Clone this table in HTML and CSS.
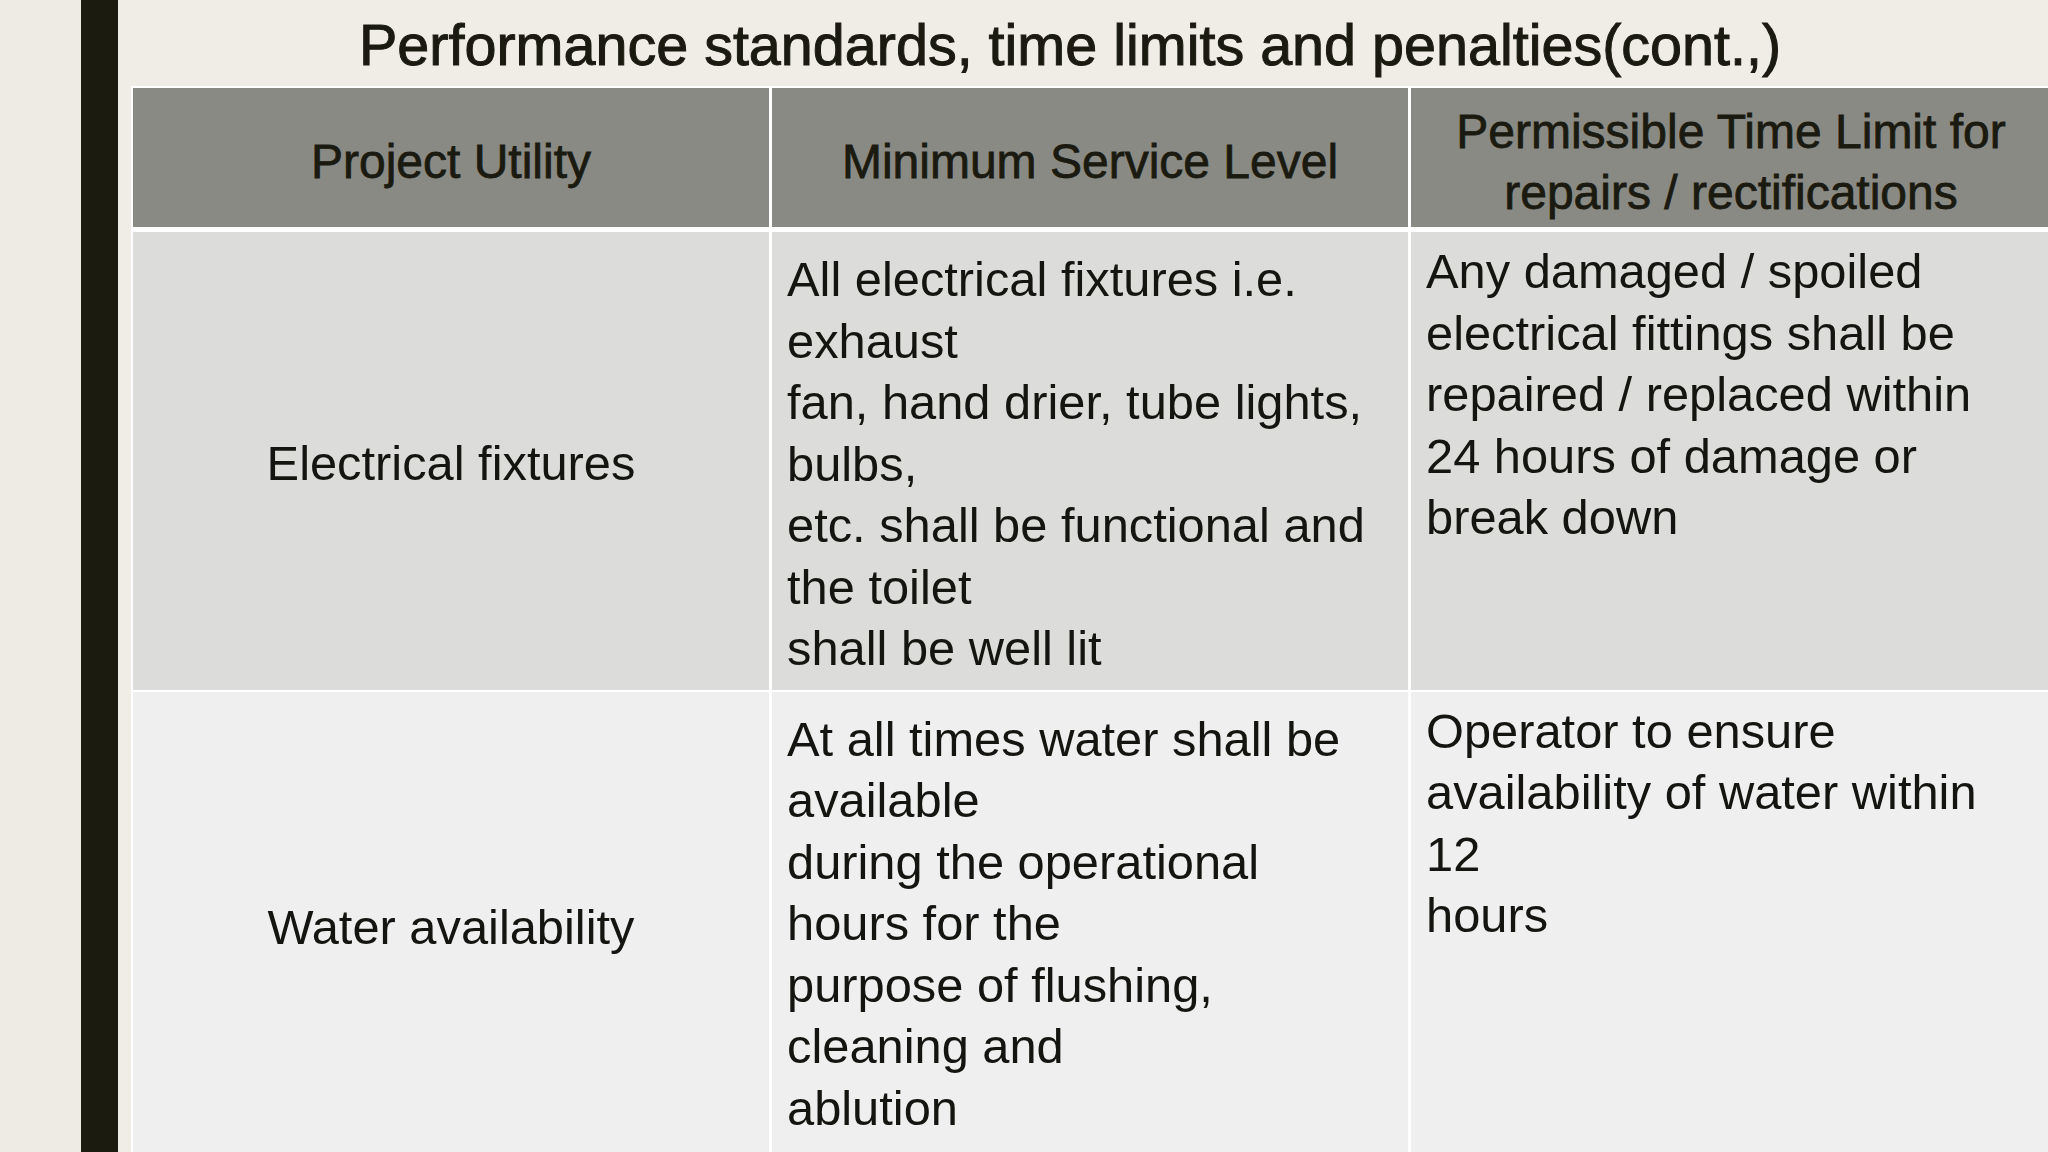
FILE: index.html
```html
<!DOCTYPE html>
<html lang="en">
<head>
<meta charset="utf-8">
<title>Performance standards, time limits and penalties(cont.,)</title>
<link rel="stylesheet" href="styles.css">
</head>
<body>
<div class="slide">
  <div class="gutter"></div>
  <div class="bar"></div>
  <main class="content">
    <h1 class="title">Performance standards, time limits and penalties(cont.,)</h1>
    <div class="table">
      <div class="cell head">Project Utility</div>
      <div class="cell head">Minimum Service Level</div>
      <div class="cell head">Permissible Time Limit for<br>repairs / rectifications</div>

      <div class="cell row-a name">Electrical fixtures</div>
      <div class="cell row-a level">All electrical fixtures i.e.<br>exhaust<br>fan, hand drier, tube lights,<br>bulbs,<br>etc. shall be functional and<br>the toilet<br>shall be well lit</div>
      <div class="cell row-a limit">Any damaged / spoiled<br>electrical fittings shall be<br>repaired / replaced within<br>24 hours of damage or<br>break down</div>

      <div class="cell row-b name">Water availability</div>
      <div class="cell row-b level">At all times water shall be<br>available<br>during the operational<br>hours for the<br>purpose of flushing,<br>cleaning and<br>ablution</div>
      <div class="cell row-b limit">Operator to ensure<br>availability of water within<br>12<br>hours</div>
    </div>
  </main>
</div>
</body>
</html>
```

FILE: styles.css
```css
html, body {
  margin: 0;
  padding: 0;
}

body {
  background: #eeebe4;
  overflow: hidden;
  font-family: "Liberation Sans", Arial, sans-serif;
  color: #141410;
}

.slide {
  display: flex;
  width: 2048px;
  height: 1152px;
  overflow: hidden;
}

.gutter {
  flex: none;
  width: 81px;
  background: #eeebe4;
}

.bar {
  flex: none;
  width: 37px;
  background: #1b1b10;
}

.content {
  flex: 1;
  min-width: 0;
  background: #efede6;
  padding-left: 13px;
}

.title {
  margin: 0 0 8px 0;
  padding: 12px 0 0 228px;
  height: 66px;
  font-size: 57.5px;
  line-height: 66px;
  font-weight: 400;
  white-space: nowrap;
  color: #1a1a10;
  -webkit-text-stroke: 1px #1a1a10;
}

.table {
  display: grid;
  grid-template-columns: 636px 636px 640px;
  gap: 2px 3px;
  padding: 2px;
  background: #ffffff;
  width: max-content;
}

.cell {
  box-sizing: border-box;
}

.head {
  height: 139px;
  margin-bottom: 3px;
  padding-top: 8px;
  display: flex;
  align-items: center;
  justify-content: center;
  text-align: center;
  background: #8a8a85;
  font-size: 48px;
  line-height: 61px;
  color: #1a1a10;
  -webkit-text-stroke: 0.8px #1a1a10;
}

.row-a {
  background: #dcdcda;
}

.row-b {
  background: #efefef;
}

.name,
.level,
.limit {
  font-size: 48.8px;
  line-height: 61.5px;
  white-space: nowrap;
}

.name {
  display: flex;
  align-items: center;
  justify-content: center;
  text-align: center;
  padding-top: 6px;
}

.level {
  padding: 17px 10px 10px 15px;
}

.limit {
  padding: 9px 10px 8px 15px;
}

.row-b.level {
  padding-bottom: 18px;
}
```
